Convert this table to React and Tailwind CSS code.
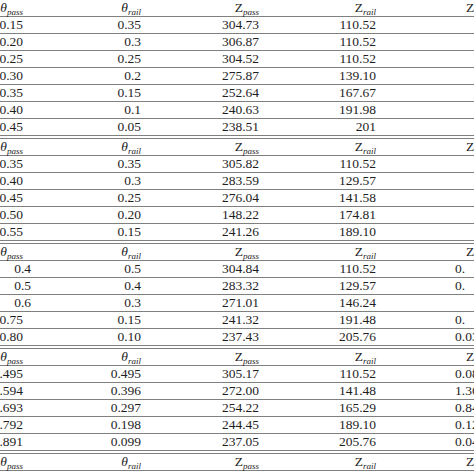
import React from 'react'

// one header row per block, repeated
const Head = ({ top }) => (
  <div
    className={`grid grid-cols-[44px_118px_118px_117px_118px] h-[18px] border-b border-[#808080] ${
      top ? 'mt-[2px] border-t' : ''
    }`}
  >
    <Cell><Sym s="θ" sub="pass" italic /></Cell>
    <Cell><Sym s="θ" sub="rail" italic /></Cell>
    <Cell><Sym s="Z" sub="pass" /></Cell>
    <Cell><Sym s="Z" sub="rail" /></Cell>
    <div className="flex items-center pl-[90px] whitespace-nowrap">
      <Sym s="Z" sub="total" />
    </div>
  </div>
)

const Sym = ({ s, sub, italic }) => (
  <span className="whitespace-nowrap">
    <span className={italic ? 'italic' : ''}>{s}</span>
    <span className="italic text-[9px] relative top-[3px]">{sub}</span>
  </span>
)

const Cell = ({ children, className = '' }) => (
  <div className={`flex items-center justify-end whitespace-nowrap ${className}`}>{children}</div>
)

const Row = ({ r }) => (
  <div className="grid grid-cols-[44px_118px_118px_117px_118px] h-[17px] border-b border-[#808080]">
    <Cell>
      <span className={r[5] ? 'mr-[-8px]' : ''}>{r[0]}</span>
    </Cell>
    <Cell>{r[1]}</Cell>
    <Cell>{r[2]}</Cell>
    <Cell>{r[3]}</Cell>
    <div className="flex items-center pl-[79px] whitespace-nowrap">{r[4]}</div>
  </div>
)

const blocks = [
  [
    ['0.15', '0.35', '304.73', '110.52', ''],
    ['0.20', '0.3', '306.87', '110.52', ''],
    ['0.25', '0.25', '304.52', '110.52', ''],
    ['0.30', '0.2', '275.87', '139.10', ''],
    ['0.35', '0.15', '252.64', '167.67', ''],
    ['0.40', '0.1', '240.63', '191.98', ''],
    ['0.45', '0.05', '238.51', '201', ''],
  ],
  [
    ['0.35', '0.35', '305.82', '110.52', ''],
    ['0.40', '0.3', '283.59', '129.57', ''],
    ['0.45', '0.25', '276.04', '141.58', ''],
    ['0.50', '0.20', '148.22', '174.81', ''],
    ['0.55', '0.15', '241.26', '189.10', ''],
  ],
  [
    ['0.4', '0.5', '304.84', '110.52', '0.', true],
    ['0.5', '0.4', '283.32', '129.57', '0.', true],
    ['0.6', '0.3', '271.01', '146.24', '', true],
    ['0.75', '0.15', '241.32', '191.48', '0.'],
    ['0.80', '0.10', '237.43', '205.76', '0.03'],
  ],
  [
    ['0.495', '0.495', '305.17', '110.52', '0.08'],
    ['0.594', '0.396', '272.00', '141.48', '1.36'],
    ['0.693', '0.297', '254.22', '165.29', '0.84'],
    ['0.792', '0.198', '244.45', '189.10', '0.12'],
    ['0.891', '0.099', '237.05', '205.76', '0.04'],
  ],
]

export default function App() {
  return (
    <div
      className="w-[474px] h-[474px] overflow-hidden bg-white text-[#1e1e1e] text-[13.5px] leading-none"
      style={{ fontFamily: '"Liberation Serif", "Times New Roman", serif' }}
    >
      <div className="ml-[-21px] w-[515px] mt-[-1px]">
        {blocks.map((b, i) => (
          <div key={i}>
            <Head top={i > 0} />
            {b.map((r, j) => (
              <Row key={j} r={r} />
            ))}
          </div>
        ))}
        <Head top />
      </div>
    </div>
  )
}
